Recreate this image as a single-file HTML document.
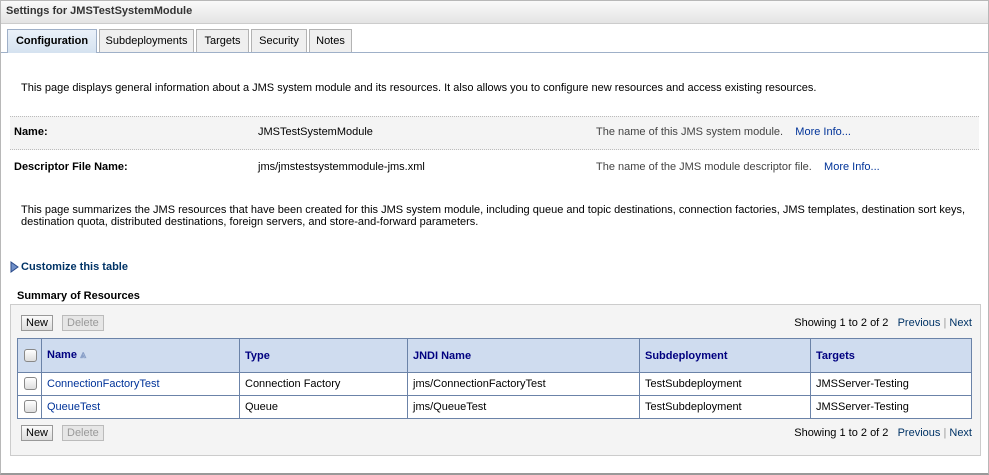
<!DOCTYPE html>
<html><head><style>
body{margin:0;width:989px;height:475px;overflow:hidden;background:#fff;font-family:"Liberation Sans",sans-serif;font-size:11px;color:#000;position:relative}
.a{position:absolute;white-space:nowrap}
.b{font-weight:bold}
.lnk{color:#003399}
.tab{position:absolute;top:29px;height:23px;border:1px solid #b3b3b3;border-bottom:none;background:#efefef;line-height:22px;text-align:center;font-size:11px;box-sizing:border-box}
.btn{position:absolute;height:16px;border:1px solid #999;background:linear-gradient(#fafafa,#ddd);font-size:11px;line-height:14px;padding:0 4px;box-sizing:border-box}
.dis{color:#999;border-color:#bbb;background:#e6e6e6}
.cb{position:absolute;width:11px;height:11px;border:1px solid #888;border-radius:3px;background:linear-gradient(#fff,#ddd)}
table{position:absolute;border-collapse:collapse;font-size:11px}
td,th{border:1px solid #6b83a8;padding:0 0 0 5px;text-align:left;white-space:nowrap}
th{background:#cfdcef;height:33px;color:#000080}
td{height:22px;background:#fff}
.sh{position:absolute;right:17px;white-space:nowrap}
</style></head><body>
<div class="a" style="left:0;top:0;width:987px;height:472px;border:1px solid #b8b8b8;border-bottom:2px solid #999"></div>
<div class="a" style="left:1px;top:1px;width:987px;height:22px;background:linear-gradient(#fafafa,#e4e4e4);border-bottom:1px solid #ccc"></div>
<div class="a b" style="left:6px;top:5px;color:#333">Settings for JMSTestSystemModule</div>
<div class="a" style="left:1px;top:52px;width:987px;height:1px;background:#9fb0c8"></div>
<div class="tab b" style="left:7px;width:90px;background:linear-gradient(#eaf1f9,#d5e2f0);border-color:#9fb0c8;height:24px">Configuration</div>
<div class="tab" style="left:99px;width:95px">Subdeployments</div>
<div class="tab" style="left:196px;width:53px">Targets</div>
<div class="tab" style="left:251px;width:56px">Security</div>
<div class="tab" style="left:309px;width:43px">Notes</div>
<div class="a" style="left:21px;top:82px">This page displays general information about a JMS system module and its resources. It also allows you to configure new resources and access existing resources.</div>
<div class="a" style="left:10px;top:116px;width:969px;height:32px;background:#f4f4f4;border-top:1px dotted #bbb;border-bottom:1px dotted #bbb"></div>
<div class="a b" style="left:14px;top:126px">Name:</div>
<div class="a" style="left:258px;top:126px">JMSTestSystemModule</div>
<div class="a" style="left:596px;top:126px;color:#444">The name of this JMS system module.&nbsp;&nbsp;&nbsp; <span class="lnk">More Info...</span></div>
<div class="a b" style="left:14px;top:161px">Descriptor File Name:</div>
<div class="a" style="left:258px;top:161px">jms/jmstestsystemmodule-jms.xml</div>
<div class="a" style="left:596px;top:161px;color:#444">The name of the JMS module descriptor file.&nbsp;&nbsp;&nbsp; <span class="lnk">More Info...</span></div>
<div class="a" style="left:21px;top:204px;line-height:12px">This page summarizes the JMS resources that have been created for this JMS system module, including queue and topic destinations, connection factories, JMS templates, destination sort keys,<br>destination quota, distributed destinations, foreign servers, and store-and-forward parameters.</div>
<svg class="a" style="left:10px;top:261px" width="9" height="12"><path d="M1 1 L8 6 L1 11 Z" fill="#6f8fc8" stroke="#2a4a8a"/></svg>
<div class="a b" style="left:21px;top:261px;color:#003366">Customize this table</div>
<div class="a b" style="left:17px;top:290px">Summary of Resources</div>
<div class="a" style="left:10px;top:304px;width:969px;height:150px;background:#f4f4f4;border:1px solid #ccc"></div>
<div class="btn" style="left:21px;top:315px">New</div>
<div class="btn dis" style="left:62px;top:315px">Delete</div>
<div class="sh" style="top:317px">Showing 1 to 2 of 2 &nbsp; <span style="color:#003366">Previous</span> <span style="color:#999">|</span> <span style="color:#003366">Next</span></div>
<table style="left:17px;top:338px;width:955px">
<tr><th style="width:18px"></th><th style="width:192px">Name <span style="color:#8aa0c8">⩓</span></th><th style="width:162px">Type</th><th style="width:226px">JNDI Name</th><th style="width:165px">Subdeployment</th><th>Targets</th></tr>
<tr><td></td><td class="lnk">ConnectionFactoryTest</td><td>Connection Factory</td><td>jms/ConnectionFactoryTest</td><td>TestSubdeployment</td><td>JMSServer-Testing</td></tr>
<tr><td></td><td class="lnk">QueueTest</td><td>Queue</td><td>jms/QueueTest</td><td>TestSubdeployment</td><td>JMSServer-Testing</td></tr>
</table>
<div class="cb" style="left:24px;top:349px"></div>
<div class="cb" style="left:24px;top:377px"></div>
<div class="cb" style="left:24px;top:400px"></div>
<div class="btn" style="left:21px;top:425px">New</div>
<div class="btn dis" style="left:62px;top:425px">Delete</div>
<div class="sh" style="top:427px">Showing 1 to 2 of 2 &nbsp; <span style="color:#003366">Previous</span> <span style="color:#999">|</span> <span style="color:#003366">Next</span></div>
</body></html>
